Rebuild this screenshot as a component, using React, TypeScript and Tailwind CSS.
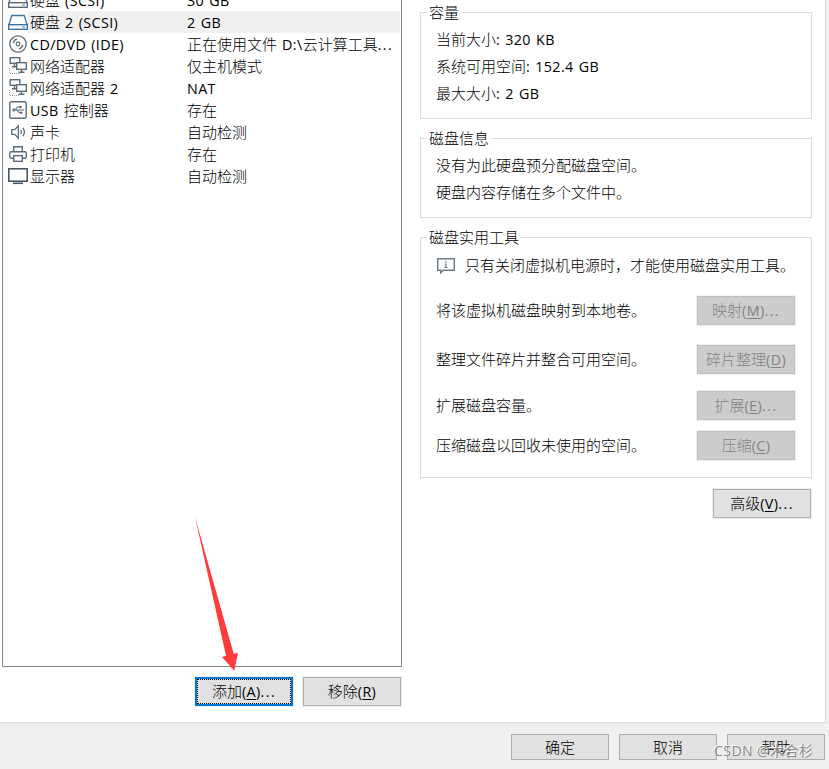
import React from 'react';
import clsx from 'clsx';

// Latin runs are set in a humanist sans, slightly smaller than the CJK glyphs
const Label: React.FC<{ text: string; hotkey?: string }> = ({ text, hotkey }) => {
  const runs = text.match(/\.{3}|[\x20-\x2d\x2f-\x7e]+(?:\.\d[\x20-\x2d\x2f-\x7e]*)?|[^\x20-\x7e]+/g) || [];
  return (
    <span className="whitespace-pre">
      {runs.map((run, i) => {
        if (!/[\x20-\x7e]/.test(run)) return <span key={i}>{run}</span>;
        const at = hotkey ? run.indexOf(hotkey) : -1;
        return (
          <span
            key={i}
            className={clsx(
              "font-['Open_Sans',sans-serif] text-[14.3px] font-normal [word-spacing:1px]",
              run === '...' ? 'tracking-[1.4px]' : 'tracking-[0.38px]'
            )}
          >
            {at < 0 ? (
              run
            ) : (
              <>
                {run.slice(0, at)}
                <span className="underline decoration-1 underline-offset-2">{hotkey}</span>
                {run.slice(at + 1)}
              </>
            )}
          </span>
        );
      })}
    </span>
  );
};

interface IconProps {
  color?: string;
}

const DiskIcon: React.FC<IconProps> = ({ color = '#5c6b78' }) => (
  <svg width="20" height="22" viewBox="0 0 20 22" fill="none" stroke={color}>
    <path d="M3.8 4.5h12.4l3 9.5H.8z" strokeWidth="1.3" fill="#fff" />
    <rect x="0.7" y="13.7" width="18.6" height="4.6" strokeWidth="1.4" fill="#fff" />
    <path d="M14 16h3" strokeWidth="1" />
  </svg>
);

const DiscIcon = () => (
  <svg width="20" height="22" viewBox="0 0 20 22" fill="none" stroke="#5c6b78" strokeWidth="1.3">
    <circle cx="10" cy="11" r="8.2" />
    <circle cx="10" cy="11" r="1.9" strokeWidth="1.1" />
    <path d="M5.2 10A5 5 0 0 1 9 6.2M14.8 12a5 5 0 0 1-3.8 3.8" strokeWidth="1.3" />
  </svg>
);

const NetworkIcon = () => (
  <svg width="20" height="22" viewBox="0 0 20 22" fill="none" stroke="#5c6b78">
    <rect x="2.2" y="2.7" width="9.6" height="5.6" strokeWidth="1.4" />
    <path d="M4 11.7h5M6.5 8.5v3" strokeWidth="1.4" />
    <rect x="8.7" y="7.7" width="9.6" height="6.6" strokeWidth="1.4" fill="#fff" />
    <path d="M13.5 14.5V17M10.5 17.2h6" strokeWidth="1.4" />
    <path d="M1.5 13v6M2 18.5h10" stroke="#8d98a1" strokeWidth="1" strokeDasharray="1 1" />
  </svg>
);

const UsbIcon = () => (
  <svg width="20" height="22" viewBox="0 0 20 22" fill="none" stroke="#5c6b78">
    <rect x="1.8" y="2.8" width="16.4" height="16.4" rx="1.5" strokeWidth="1.4" />
    <path d="M5 11h11M7 11l2.5-3H12M9 11l2.2 2.8H13" strokeWidth="1.1" />
    <path d="M6.5 8.8L3.8 11l2.7 2.2z" fill="#5c6b78" stroke="none" />
    <rect x="11.5" y="7" width="2.2" height="2.2" fill="#5c6b78" stroke="none" />
    <circle cx="13.3" cy="13.8" r="1.2" fill="#5c6b78" stroke="none" />
  </svg>
);

const SoundIcon = () => (
  <svg width="20" height="22" viewBox="0 0 20 22" fill="none" stroke="#5c6b78" strokeWidth="1.3">
    <path d="M3.7 8.7h3l3.6-3.8v12.2l-3.6-3.8h-3z" />
    <path d="M12.7 8.8c1 1.4 1 3 0 4.4M14.9 6.8c1.9 2.7 1.9 5.7 0 8.4" />
  </svg>
);

const PrinterIcon = () => (
  <svg width="20" height="22" viewBox="0 0 20 22" fill="none" stroke="#5c6b78" strokeWidth="1.4">
    <path d="M5.7 8.5V3.7h8.6v4.8" />
    <path d="M5.5 15.3H3.2a1.5 1.5 0 0 1-1.5-1.5v-3.6a1.5 1.5 0 0 1 1.5-1.5h13.6a1.5 1.5 0 0 1 1.5 1.5v3.6a1.5 1.5 0 0 1-1.5 1.5h-2.3" />
    <rect x="5.7" y="12.7" width="8.6" height="5.6" fill="#fff" />
  </svg>
);

const DisplayIcon = () => (
  <svg width="20" height="22" viewBox="0 0 20 22" fill="none" stroke="#4a5966">
    <rect x="0.8" y="3.8" width="18.4" height="12.4" strokeWidth="1.6" />
    <path d="M5 18.3h10" strokeWidth="1.6" />
  </svg>
);

const InfoIcon = () => (
  <svg width="20" height="18" viewBox="0 0 20 18" fill="none" stroke="#6c7a86">
    <path d="M1.7 2.7h16.6v11.6H7.2L4.7 16.8v-2.5h-3z" strokeWidth="1.4" />
    <path d="M10 5v1.4M8.8 8h1.2v3.5M8.5 11.5h3" strokeWidth="1.2" />
  </svg>
);

const devices = [
  { icon: <DiskIcon />, name: '硬盘 (SCSI)', summary: '30 GB' },
  { icon: <DiskIcon color="#3f7399" />, name: '硬盘 2 (SCSI)', summary: '2 GB', selected: true },
  { icon: <DiscIcon />, name: 'CD/DVD (IDE)', summary: '正在使用文件 D:\\云计算工具...' },
  { icon: <NetworkIcon />, name: '网络适配器', summary: '仅主机模式' },
  { icon: <NetworkIcon />, name: '网络适配器 2', summary: 'NAT' },
  { icon: <UsbIcon />, name: 'USB 控制器', summary: '存在' },
  { icon: <SoundIcon />, name: '声卡', summary: '自动检测' },
  { icon: <PrinterIcon />, name: '打印机', summary: '存在' },
  { icon: <DisplayIcon />, name: '显示器', summary: '自动检测' },
];

const utilities = [
  { text: '将该虚拟机磁盘映射到本地卷。', button: '映射(M)...', hotkey: 'M', gap: 'mt-[17px]' },
  { text: '整理文件碎片并整合可用空间。', button: '碎片整理(D)', hotkey: 'D', gap: 'mt-5' },
  { text: '扩展磁盘容量。', button: '扩展(E)...', hotkey: 'E', gap: 'mt-[17px]' },
  { text: '压缩磁盘以回收未使用的空间。', button: '压缩(C)', hotkey: 'C', gap: 'mt-[11px]' },
];

interface ButtonProps {
  text: string;
  hotkey?: string;
  disabled?: boolean;
  focused?: boolean;
  small?: boolean;
}

const Button: React.FC<ButtonProps> = ({ text, hotkey, disabled, focused, small }) => (
  <button
    disabled={disabled}
    className={clsx(
      'flex w-[98px] shrink-0 items-center justify-center ring-1 ring-[#f0f0f0]',
      small ? 'h-[26px]' : 'h-[29px]',
      focused && 'border-2 border-[#0078d7] bg-[#e1e1e1]',
      disabled && 'border border-[#bfbfbf] bg-[#cccccc] text-[#838383]',
      !focused && !disabled && 'border border-[#adadad] bg-[#e1e1e1]'
    )}
  >
    <span
      className={clsx(
        'flex h-full w-full items-center justify-center',
        !small && 'pb-px',
        focused && 'border border-dotted border-black'
      )}
    >
      <Label text={text} hotkey={hotkey} />
    </span>
  </button>
);

const Group: React.FC<{ title: string; className: string; children: React.ReactNode }> = ({
  title,
  className,
  children,
}) => (
  <fieldset className={clsx('w-[392px] border border-[#dcdcdc]', className)}>
    <legend className="ml-1.5 h-6 px-0.5 leading-[23px]">{title}</legend>
    {children}
  </fieldset>
);

const App: React.FC = () => {
  return (
    <div className="relative flex h-[769px] w-[829px] flex-col overflow-hidden bg-[#f0f0f0] font-['Noto_Sans_CJK_SC',sans-serif] text-[15px] leading-[22px] font-light text-black">
      <main className="flex h-[723px] w-[826px] border-r border-b border-[#d9d9d9] bg-white">
        <section className="ml-0.5 w-[400px]">
          <div className="h-[667px] overflow-hidden border-x border-b border-[#828790]">
            <ul className="-mt-[11px]">
              {devices.map((device) => (
                <li key={device.name} className="flex h-[22px] pl-[5px]">
                  {device.icon}
                  <div
                    className={clsx(
                      'mr-px flex flex-1 leading-[21px]',
                      device.selected && 'bg-[#f0f0f0]'
                    )}
                  >
                    <span className="w-[159px] pl-0.5">
                      <Label text={device.name} />
                    </span>
                    <Label text={device.summary} />
                  </div>
                </li>
              ))}
            </ul>
          </div>
          <div className="mt-2.5 flex justify-end gap-2.5 pr-px">
            <Button text="添加(A)..." hotkey="A" focused />
            <Button text="移除(R)" hotkey="R" />
          </div>
        </section>

        <section className="ml-[18px] w-[392px]">
          <Group title="容量" className="h-[119px]">
            <div className="mt-0.5 pl-[15px] leading-[26px]">
              <p className="h-[27px]"><Label text="当前大小: 320 KB" /></p>
              <p className="h-[27px]"><Label text="系统可用空间: 152.4 GB" /></p>
              <p className="h-[27px]"><Label text="最大大小: 2 GB" /></p>
            </div>
          </Group>
          <Group title="磁盘信息" className="mt-[7px] h-[92px]">
            <div className="mt-0.5 pl-[15px] leading-[26px]">
              <p className="h-[27px]">没有为此硬盘预分配磁盘空间。</p>
              <p className="h-[27px]">硬盘内容存储在多个文件中。</p>
            </div>
          </Group>
          <Group title="磁盘实用工具" className="mt-[7px] h-[253px]">
            <div className="mt-0.5 flex h-7 items-center pl-[15px] whitespace-nowrap">
              <InfoIcon />
              <span className="ml-[9px]">只有关闭虚拟机电源时，才能使用磁盘实用工具。</span>
            </div>
            {utilities.map((item) => (
              <div
                key={item.button}
                className={clsx('flex h-[29px] items-center justify-between pr-4 pl-[15px]', item.gap)}
              >
                <span className="pb-px">{item.text}</span>
                <Button text={item.button} hotkey={item.hotkey} disabled />
              </div>
            ))}
          </Group>
          <div className="mt-[11px] flex justify-end pr-px">
            <Button text="高级(V)..." hotkey="V" />
          </div>
        </section>
      </main>

      <footer className="mt-[11px] flex justify-end gap-2.5 pr-1">
        <Button text="确定" small />
        <Button text="取消" small />
        <Button text="帮助" small />
      </footer>

      {/* pointer to the add button */}
      <svg className="absolute top-[516px] left-[194px]" width="46" height="156" viewBox="194 516 46 156">
        <path d="M195 517L233.7 653.8 238 653 234.3 670.7 222 657 226 655.7z" fill="#ff3b3b" />
      </svg>
      <span className="absolute top-[741px] left-[714px] font-['Open_Sans','Noto_Sans_CJK_SC',sans-serif] text-sm font-normal tracking-[0.45px] whitespace-nowrap text-[#8c8c8c] [text-shadow:-1px_-1px_0_#fafafa]">
        CSDN @木合杉
      </span>
    </div>
  );
};

export default App;
